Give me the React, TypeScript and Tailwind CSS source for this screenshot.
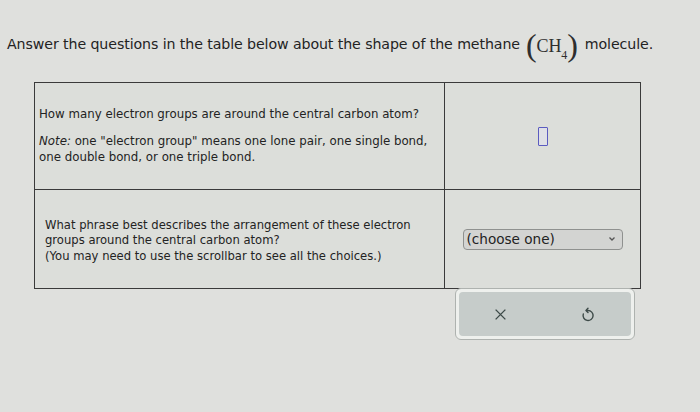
import React from "react";

export default function App() {
  return (
    <div className="w-[700px] h-[412px] bg-[#dfe0dd] overflow-hidden font-['DejaVu_Sans',sans-serif] text-[#232323]">
      <div className="pt-[26px] pl-[7px] flex items-center h-[63px] text-[14.2px] tracking-[-0.1px]">
        <span>Answer the questions in the table below about the shape of the methane</span>
        <span className="ml-[6px] flex items-center font-['Liberation_Serif',serif] text-[#2e2e2e]">
          <span className="text-[32px] leading-none font-light">(</span>
          <span className="text-[18px] leading-none mt-[2px]">CH<sub className="text-[12px] align-[-4px]">4</sub></span>
          <span className="text-[32px] leading-none font-light">)</span>
        </span>
        <span className="ml-[7px]">molecule.</span>
      </div>
      <div className="mt-[19px] ml-[34px] w-[607px] border border-[#3a3a3a] bg-[#dcdeda] grid grid-cols-[410px_1fr]">
        <div className="h-[107px] border-r border-b border-[#3a3a3a] flex flex-col justify-center pl-[4px] pr-[6px] text-[11.8px] leading-[15.5px]">
          <p>How many electron groups are around the central carbon atom?</p>
          <p className="mt-[12px]"><i>Note:</i> one "electron group" means one lone pair, one single bond,<br />one double bond, or one triple bond.</p>
        </div>
        <div className="h-[107px] border-b border-[#3a3a3a] flex items-center justify-center">
          <div className="w-[10px] h-[19px] border-[1.5px] border-[#5b5bc0] bg-[#dfe0e6] rounded-[1px]" />
        </div>
        <div className="h-[98px] border-r border-[#3a3a3a] flex flex-col justify-center pl-[10px] pr-[6px] text-[11.6px] leading-[15.5px] pt-[4px]">
          <p>What phrase best describes the arrangement of these electron<br />groups around the central carbon atom?</p>
          <p>(You may need to use the scrollbar to see all the choices.)</p>
        </div>
        <div className="h-[98px] flex items-center justify-center">
          <div className="w-[160px] h-[21px] rounded-[4px] border border-[#8f918f] bg-[#d3d4d2] flex items-center justify-between pl-[3px] pr-[6px]">
            <span className="text-[13.6px] text-[#222]">(choose one)</span>
            <svg width="8" height="6" viewBox="0 0 8 6">
              <path d="M1.5 1.5 L4 4 L6.5 1.5" fill="none" stroke="#555" strokeWidth="1.3" />
            </svg>
          </div>
        </div>
      </div>
      <div className="ml-[455px] -mt-[1px] w-[180px] h-[52px] rounded-[6px] border border-[#aeb2af] bg-[#eef0ed] p-[3px]">
        <div className="w-full h-full rounded-[4px] bg-[#c6ccca] flex items-center justify-between pl-[35px] pr-[36px]">
          <svg width="13" height="13" viewBox="0 0 12 12">
            <path d="M1.5 1.5 L10.5 10.5 M10.5 1.5 L1.5 10.5" stroke="#3d4a48" strokeWidth="1.3" fill="none" />
          </svg>
          <svg width="14" height="16" viewBox="0 0 14 16">
            <path d="M5.5 4.5 H7 A5 5 0 1 1 2.3 8" stroke="#3d4a48" strokeWidth="1.4" fill="none" strokeLinecap="round" />
            <path d="M7 2.3 L5 4.5 L7 6.6" stroke="#3d4a48" strokeWidth="1.4" fill="none" strokeLinecap="round" strokeLinejoin="round" />
          </svg>
        </div>
      </div>
    </div>
  );
}
